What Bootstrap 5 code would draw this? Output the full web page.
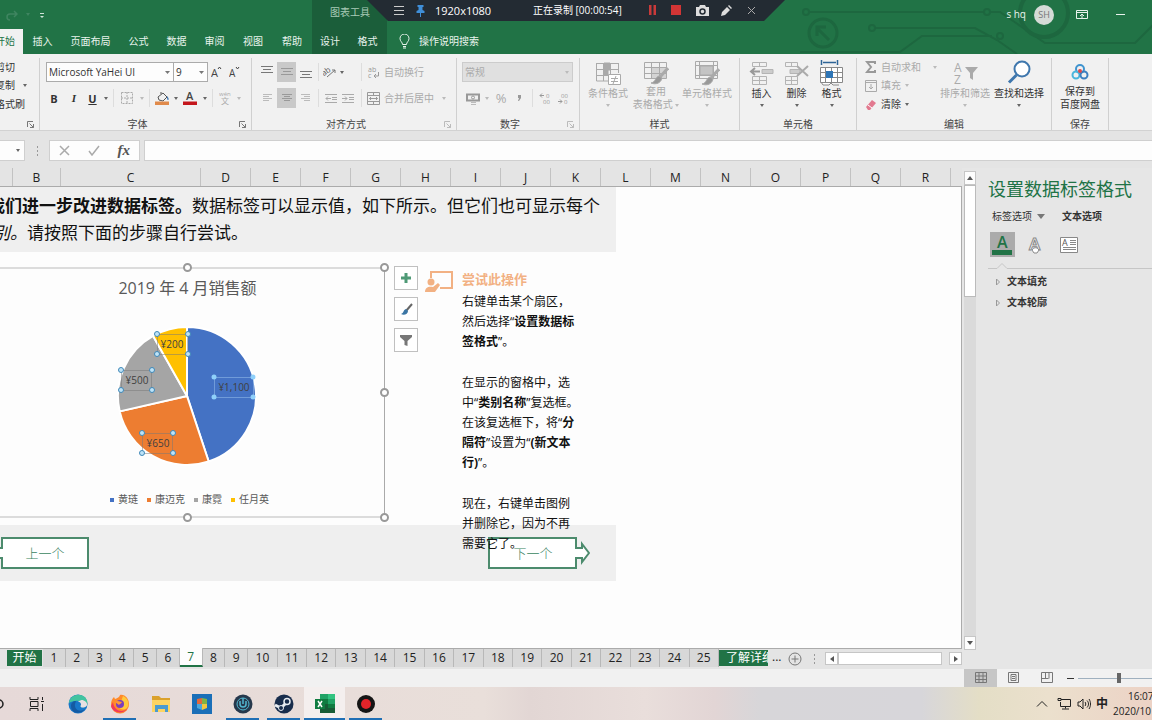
<!DOCTYPE html>
<html lang="zh-CN">
<head>
<meta charset="utf-8">
<meta name="viewport" content="width=device-width, initial-scale=1">
<title>图表教程 - Excel</title>
<link href="https://cdn.jsdelivr.net/npm/bootstrap@5.3.0/dist/css/bootstrap.min.css" rel="stylesheet">
<style>
:root{--xl:#217346;--xl-dark:#1b5e3a;--line:#c8c8c8;--ink:#333;--off:#aaa}
body{font-family:"Open Sans","Noto Sans CJK SC",sans-serif;font-size:10px;line-height:13px;color:var(--ink);background:#e6e6e6}
button,input,select{font:inherit;color:inherit}
button{background:none;border:0;padding:0}
svg{display:block;flex:none}
.st{fill:none}
.st:not([stroke]){stroke:currentColor}
.dn{width:0;height:0;border:2px solid transparent;border-top:3px solid #666;border-bottom:0;flex:none;justify-self:center}
.off{color:var(--off)}
.off .dn,.dn.off{border-top-color:#bbb}
.sep{width:1px;height:18px;background:#ddd;justify-self:center}

/* title bar and tabs */
.topbar{background:var(--xl);color:#e9f3ed;height:54px}
.circuit{right:0;top:0}
.title-row{height:29px}
.quick{width:312px;padding-left:6px;color:#3f8560}
.quick .dn{border-top-color:#3f8560}
.tool-title{width:75px;background:var(--xl-dark);color:#a9cbb7;padding:6px 0 0 18px}
.winbtns{padding-right:26px}
.winbtns button:first-of-type{margin:0 28px 0 22px}
.tab-row{height:25px}
.rtab{height:25px;text-align:center}
.rtab.on{background:#f1f1f1;color:var(--xl);width:23px;padding-right:8px}
.rtabs{display:grid;grid-template-columns:39px 57px 39px 37px 39px 38px 40px}
.ctx{display:grid;grid-template-columns:36px 39px;background:var(--xl-dark)}
.tell{gap:9px;margin-left:12px}
.avatar{width:20px;height:20px;background:#d5dbd7;color:#777;font-size:9px}
.rec{left:50%;top:0;width:418px;height:21px;margin-left:-209px;background:#232b33;color:#fff;clip-path:polygon(0 0,100% 0,397px 100%,21px 100%);display:grid;grid-template-columns:22px 19px 98px 115px 23px 25px 24px 27px 20px;padding-left:27px;align-items:center;z-index:3}
.rec>*{justify-self:start}
.rec .res{font-size:11px}

/* ribbon */
.ribbon{height:77px;background:#f1f1f1;border-bottom:1px solid #d2d2d2}
.grp{border-right:1px solid #d0d0d0;margin-top:4px;height:72px;position:relative}
.grp-name{height:13px;line-height:15px;position:relative;color:#444}
.launch{position:absolute;right:5px;top:4px}
.two-rows{display:grid;row-gap:6px;padding-top:4px}
.rr{display:grid;height:20px;align-items:center;justify-items:center}
.rr>.sel{background:#c9c9c9;width:19px;height:20px;display:grid;place-items:center}
.g-clip{width:40px}.g-font{width:212px}.g-align{width:205px}.g-num{width:123px}.g-style{width:160px}.g-cells{width:117px}.g-edit{width:195px}.g-save{width:57px}
.font1{grid-template-columns:128px 34px 18px 18px;padding-left:6px}
.font2{grid-template-columns:20px 20px 17px 10px 5px 22px 8px 6px 20px 8px 20px 9px 7px 18px 10px;padding-left:4px}
.font2 button{font-size:11px}
.align1{grid-template-columns:20px 19px 19px 6px 17px 8px 9px 12px auto;padding-left:5px;justify-content:start}
.align2{grid-template-columns:20px 19px 19px 6px 19px 15px 12px auto;padding-left:5px;justify-content:start}
.num2{grid-template-columns:18px 10px 18px 18px 8px 18px 18px;padding-left:7px}
.pct{font-size:13px}
.fsel{appearance:none;width:100%;height:20px;border:1px solid #ababab;border-radius:0;padding:0 2px;line-height:18px;color:#333;background:#fdfdfd url("data:image/svg+xml,%3Csvg xmlns='http://www.w3.org/2000/svg' width='5' height='3'%3E%3Cpath d='M0 0h5L2.500 3z' fill='%23777'/%3E%3C/svg%3E") no-repeat right 3px center}
.fsel:disabled{background-color:#e0e0e0;background-image:none;color:#aaa;border-color:#ccc;opacity:1}
.num-pad{padding:0 6px 0 5px}
.num-pad .dn{right:10px;top:9px}
.big{height:53px;line-height:13px}
.big .pic{height:29px}
.big .dn{margin-top:4px}
.small-rows{display:grid;grid-template-rows:18px 19px 19px;align-items:center}
.cut{width:15px}.cut.wide{width:25px}
.w35{width:35px}.w48{width:48px}.w54{width:54px}.w81{width:81px}

/* formula bar */
.fbar{height:37px;background:#e4e4e4;padding:9px 0 7px}
.fbox{background:#fdfdfd;border:1px solid #cfcfcf;height:21px}
.namebox{width:25px;border-left:0}
.fx{width:91px;color:#aaa}
.serif-i{font-family:"Liberation Serif",serif;font-style:italic}
.fxbtn{font-size:15px;color:#555}

/* sheet */
.work{min-height:0}
.heads{height:19px;background:#e4e4e4;border-bottom:1px solid #ababab;font-size:12px;line-height:19px;color:#222}
.heads span{width:50px;flex:none;text-align:center;border-right:1px solid #c2c2c2}
.heads .ca{width:13px}.heads .cb{width:48px}.heads .cc{width:140px}
.cells{background:#fdfdfd;border-right:1px solid #ababab;border-bottom:1px solid #ababab}
.band{background:#efefef;width:616px}
.intro{height:65px;padding-top:5px;font-size:17px;line-height:27px;color:#111}
.intro p{margin:0 0 0 -12px;white-space:nowrap}
.intro p+p{margin-left:-7px}
.lesson{height:273px}
.chartbox{width:394px;height:251px;margin:15px 0 0 -9px;border:solid #dcdcdc;border-width:2px 0;border-right:1px solid #aaa;color:#595959}
.chart-title{font-size:16px;line-height:20px;margin-top:9px}
.hd{position:absolute;width:9px;height:9px;border:2px solid #999;border-radius:50%;background:#fff}
.hd.t{top:-6px}.hd.b{bottom:-6px}.hd.m{left:192px}.hd.e{right:-5px}.hd.c{top:119px}
.pie{margin-top:26px}
.pie text{font-size:10px;fill:#404040}
.legend-row{margin-top:25px;gap:9px}
.sw{width:4px;height:4px}
.k1{background:#4472c4}.k2{background:#ed7d31}.k3{background:#a5a5a5}.k4{background:#ffc000}
.side-tools{width:24px;margin:14px 0 0 9px;gap:7px}
.side-tools button{height:24px;border:1px solid #c0c0c0;background:#fff;display:grid;place-items:center}
.try-icon{margin:18px 8px 0 7px}
.steps{font-size:12px;line-height:20px;color:#111;margin-top:17px;white-space:nowrap;z-index:2;height:0}
.steps h2{font-size:13px;line-height:20px;font-weight:700;color:#f2b183;margin:0 0 3px}
.steps p{margin:0 0 21px}
.navband{height:56px;padding:12px 26px 0 0}
.navband button{height:32px;color:#39835f;font-size:13px;font-weight:300}
.navband svg{position:absolute;top:0;right:0}
.prev{width:90px}.prev span{position:relative}
.next{width:102px}.next span{position:relative;margin-right:12px}

.vbar{width:18px;padding:3px 4px 19px 2px}
.vbar button,.hbar button{background:#fdfdfd;border:1px solid #c6c6c6;display:grid;place-items:center}
.vbar button{height:14px}
.vthumb{height:112px;background:#fff;border:1px solid #bbb}
.vtrack{background:#dadada}
.tri{width:0;height:0;border:3px solid transparent}
.tri.u{border-bottom:4px solid #555;border-top:0}.tri.d{border-top:4px solid #555;border-bottom:0}
.tri.l{border-right:4px solid #555;border-left:0}.tri.r{border-left:4px solid #555;border-right:0}

.sheets{height:20px;font-size:12px;line-height:15px;color:#222;background:#e4e4e4}
.sheet-list{width:676px;height:18px;background:#d8d8d8}
.sheet-list button{flex:23 1 0;min-width:0;padding-bottom:2px;border-right:1px solid #b8b8b8}
.sheet-list button.n2{flex-grow:30}
.sheet-list .on{background:#fdfdfd;color:var(--xl);border-bottom:2px solid var(--xl);margin-top:-1px;padding:0}
.gtab{background:var(--xl);color:#fff;height:16px;line-height:14px;margin-top:1px;overflow:hidden;white-space:nowrap}
.gtab.first{width:35px;margin:1px 1px 0 7px}
.gtab.last{width:49px;padding-left:7px;text-align:left}
.hbar{width:137px;height:13px;margin-top:3px}
.hbar button{width:13px}
.hthumb{background:#fff;border:1px solid #c6c6c6;width:104px}

/* format pane */
.fpane{width:172px;padding:9px 0 0 8px}
.fpane h1{font-size:18px;line-height:24px;color:var(--xl);margin:0;font-weight:400;white-space:nowrap}
.ptabs{margin:9px 0 0 4px}
.picons{margin:9px 0 0 2px;gap:8px}
.picons button{width:25px;height:25px;display:grid;place-items:center}
.picons .on{background:#ababab}
.rule{margin:5px 0 2px}
.pitem{height:21px;padding-left:8px;font-weight:700;gap:7px}

.statusbar{height:18px;background:#f1f1f1}
.vmode{width:33px;height:18px;display:grid;place-items:center;color:#777}
.vmode.on{background:#c6c6c6}
.zoomer{appearance:none;width:74px;height:18px;background:none;margin:0 0 0 4px}
.zoomer::-webkit-slider-runnable-track{height:1px;background:#9fb0bf}
.zoomer::-webkit-slider-thumb{appearance:none;width:4px;height:10px;margin-top:-5px;background:#666}

.taskbar{height:33px;background:linear-gradient(90deg,#e6d9d8 0,#e8ddd9 30%,#e9dfda 42%,#e2d6d4 46%,#e9dedb 56%,#e2d5d5 62%,#d7d6d9 66%,#d7d6da 80%,#e4dec6 85%,#ebe0cd 91%,#ecd2c5 100%);color:#222}
.apps{display:grid;grid-template-columns:16px 41px 42px repeat(7,41px)}
.apps button{height:33px;display:grid;place-items:center;position:relative}
.apps .run::after{content:"";position:absolute;left:4px;right:4px;bottom:0;height:2px;background:#1f6fb5}
.apps .act{background:#f4efee}.apps .act::after{left:0;right:0}
.tray{gap:5px}
.ime{font-size:12px}
.clock{width:39px;line-height:15px;white-space:nowrap}
.clock-t{padding-left:15px}
</style>
</head>
<body class="d-flex flex-column vh-100 overflow-hidden">

<header class="topbar position-relative flex-shrink-0">
  <svg class="circuit position-absolute" width="362" height="54" fill="none" stroke="#1d673f" stroke-width="2">
    <circle cx="16" cy="12" r="3"/><path d="M19 12h176M201 12h9l45 31h90l22-22h10M85 28h100l22 12 20 14M10 52h100l22-16h70"/><circle cx="197" cy="12" r="3"/><circle cx="82" cy="28" r="3"/><circle cx="210" cy="36" r="3"/>
    <circle cx="33" cy="33" r="14" stroke-width="3"/><path d="M39 40L27 28M27 36v-9h9" stroke-width="3"/><circle cx="254" cy="13" r="24" stroke-width="4"/>
  </svg>
  <div class="rec position-absolute" aria-label="录制工具">
    <svg width="11" height="12" class="st" stroke="#ccc"><path d="M0 1.500h10M0 5.500h10M0 9.500h10"/></svg>
    <svg width="9" height="13" fill="#3f8fd8"><path d="M1.500 1h6v2h-1v3l2 1v2H.5V7l2-1V3h-1zM4 9h1v4H4z"/></svg>
    <span class="res">1920x1080</span>
    <span>正在录制 [00:00:54]</span>
    <svg width="9" height="11" fill="#c93a3a"><path d="M1 0h2.500v10H1zM5.500 0H8v10H5.500z"/></svg>
    <svg width="11" height="11" fill="#d23535"><path d="M0 0h10v10H0z"/></svg>
    <svg width="13" height="12"><path d="M0 2h3l1-2h5l1 2h3v9H0z" fill="#ddd"/><circle cx="6.500" cy="6.500" r="2.500" fill="none" stroke="#232b33" stroke-width="1.500"/></svg>
    <svg width="12" height="12" fill="#ddd"><path d="M1 11l1-4 5-5 3 3-5 5zM8 1l1-1 3 3-1 1z"/></svg>
    <svg width="9" height="9" class="st" stroke="#aaa"><path d="M1 1l7 7M8 1L1 8"/></svg>
  </div>
  <div class="title-row d-flex">
    <div class="quick d-flex align-items-center gap-2">
      <svg width="12" height="12" class="st"><path d="M11 5H4a3 3 0 0 0 0 6M8 2l3 3-3 3" stroke-width="1.500"/></svg>
      <span class="dn"></span>
      <svg width="8" height="8" fill="#cfe3d8"><path d="M2 2h4v1H2zM2 5h4L4 7z"/></svg>
    </div>
    <div class="tool-title">图表工具</div>
    <div class="winbtns ms-auto d-flex align-items-center position-relative">
      <span class="me-2">s hq</span>
      <span class="avatar rounded-circle d-flex align-items-center justify-content-center">SH</span>
      <button aria-label="功能区显示选项"><svg width="12" height="10" class="st"><path d="M.5.5h11v8H.5zM.5 2.500h11M6 8V4M4 6l2-2 2 2"/></svg></button>
      <button aria-label="最小化"><svg width="10" height="4" class="st"><path d="M0 1.500h9"/></svg></button>
    </div>
  </div>
  <nav class="tab-row d-flex">
    <button class="rtab on d-flex justify-content-end align-items-center overflow-hidden text-nowrap">开始</button>
    <div class="rtabs">
      <button class="rtab">插入</button><button class="rtab">页面布局</button><button class="rtab">公式</button><button class="rtab">数据</button><button class="rtab">审阅</button><button class="rtab">视图</button><button class="rtab">帮助</button>
    </div>
    <div class="ctx"><button class="rtab">设计</button><button class="rtab">格式</button></div>
    <button class="tell d-flex align-items-center"><svg width="11" height="15" class="st"><path d="M3.500 10.500C3.500 8 1 7.500 1 4.500a4.200 4.200 0 0 1 9 0c0 3-2.500 3.500-2.500 6zM4 12.500h3M4 14h3"/></svg>操作说明搜索</button>
  </nav>
</header>

<section class="ribbon d-flex flex-shrink-0 overflow-hidden">
  <div class="grp g-clip flex-shrink-0 d-flex flex-column justify-content-between">
    <div class="small-rows">
      <button class="cut overflow-hidden d-flex justify-content-end text-nowrap">剪切</button>
      <div class="d-flex align-items-center gap-2"><button class="cut overflow-hidden d-flex justify-content-end text-nowrap">复制</button><span class="dn"></span></div>
      <button class="cut wide overflow-hidden d-flex justify-content-end text-nowrap">格式刷</button>
    </div>
    <div class="grp-name"><svg class="launch st" stroke="#777" width="7" height="7"><path d="M.5 6V.5H6M2.500 2.500l4 4M6.500 3v3.500H3"/></svg></div>
  </div>

  <div class="grp g-font flex-shrink-0 d-flex flex-column justify-content-between">
    <div class="two-rows">
      <div class="rr font1">
        <select class="fsel" aria-label="字体"><option>Microsoft YaHei UI</option></select>
        <select class="fsel border-start-0" aria-label="字号"><option>9</option></select>
        <button aria-label="增大字号"><svg width="12" height="13"><text x="0" y="11" font-size="11" fill="#444">A</text><path d="M7 3l1.500-2L10 3" class="st" stroke="#444"/></svg></button>
        <button aria-label="减小字号"><svg width="12" height="13"><text x="0" y="11" font-size="10" fill="#444">A</text><path d="M7 1l1.500 2L10 1" class="st" stroke="#444"/></svg></button>
      </div>
      <div class="rr font2">
        <button class="fw-bold">B</button><button class="serif-i fw-bold">I</button><button class="fw-bold text-decoration-underline">U</button><span class="dn"></span><span class="sep"></span>
        <svg width="12" height="12" class="st off" stroke-dasharray="2 1"><path d="M.5.5h11v11H.5zM6 0v12M0 6h12"/></svg><span class="dn off"></span><span class="sep"></span>
        <svg width="15" height="14"><path d="M3 6l5-4 4 4-4 4-4-1z M6 3V1" class="st" stroke="#555"/><path d="M12 5c2 2 2 4 1 4s-1-2-1-4" fill="#3b76b5"/><path d="M0 10.500h14V14H0z" fill="#e08a4a"/></svg><span class="dn"></span>
        <svg width="14" height="14"><text x="3" y="9" font-size="11" font-weight="600" fill="#444">A</text><path d="M0 10.500h14V14H0z" fill="#c4161c"/></svg><span class="dn"></span><span class="sep"></span>
        <svg width="12" height="14" fill="#aaa"><text x="0" y="5" font-size="6">wén</text><text x="2" y="13" font-size="8">文</text></svg><span class="dn off"></span>
      </div>
    </div>
    <div class="grp-name text-center pe-3">字体<svg class="launch st" stroke="#777" width="7" height="7"><path d="M.5 6V.5H6M2.500 2.500l4 4M6.500 3v3.500H3"/></svg></div>
  </div>

  <div class="grp g-align flex-shrink-0 d-flex flex-column justify-content-between">
    <div class="two-rows">
      <div class="rr align1">
        <svg width="12" height="12" class="st" stroke="#777"><path d="M0 .5h12M2 3.500h8M0 6.500h12"/></svg>
        <span class="sel"><svg width="12" height="12" class="st" stroke="#999"><path d="M0 2.500h12M2 5.500h8M0 8.500h12"/></svg></span>
        <svg width="12" height="12" class="st" stroke="#777"><path d="M0 5.500h12M2 8.500h8M0 11.500h12"/></svg><span class="sep"></span>
        <svg width="13" height="12" class="st" stroke="#777"><text x="0" y="8" font-size="8" fill="#555" stroke="none" transform="rotate(-35 4 8)">ab</text><path d="M4 11l8-7M9 4h3v3"/></svg><span class="dn"></span><i></i><span class="sep"></span>
        <button class="off d-flex align-items-center gap-1" disabled><svg width="13" height="13" fill="#999"><text x="1" y="6" font-size="7">ab</text><text x="1" y="12" font-size="7">c</text><path d="M11.500 6v4H7M9 8l-2 2 2 2" class="st" stroke="#999"/></svg>自动换行</button>
      </div>
      <div class="rr align2">
        <svg width="10" height="10" class="st" stroke="#bbb"><path d="M1 1.500h9M1 3.500h6M1 5.500h9M1 7.500h6"/></svg>
        <span class="sel"><svg width="10" height="10" class="st" stroke="#999"><path d="M0 1.500h10M2 3.500h6M0 5.500h10M2 7.500h6"/></svg></span>
        <svg width="10" height="10" class="st" stroke="#bbb"><path d="M0 1.500h9M3 3.500h6M0 5.500h9M3 7.500h6"/></svg><span class="sep"></span>
        <svg width="12" height="11" class="st" stroke="#aaa"><path d="M0 1.500h12M7 4.500h5M7 6.500h5M0 9.500h12M6 5.500H1M3 3.500l-2 2 2 2"/></svg>
        <svg width="12" height="11" class="st" stroke="#aaa"><path d="M0 1.500h12M7 4.500h5M7 6.500h5M0 9.500h12M0 5.500h5M3 3.500l2 2-2 2"/></svg><span class="sep"></span>
        <button class="off d-flex align-items-center gap-1" disabled><svg width="13" height="13" class="st" stroke="#999"><path d="M.5.5h12v12H.5zM.5 3.500h12M.5 9.500h12M6.500 0v3.500M6.500 9.500V13M2.500 6.500h8M4 5L2.500 6.500 4 8M9 5l1.500 1.500L9 8"/></svg>合并后居中<span class="dn ms-1"></span></button>
      </div>
    </div>
    <div class="grp-name text-center pe-3">对齐方式<svg class="launch st" stroke="#bbb" width="7" height="7"><path d="M.5 6V.5H6M2.500 2.500l4 4M6.500 3v3.500H3"/></svg></div>
  </div>

  <div class="grp g-num flex-shrink-0 d-flex flex-column justify-content-between">
    <div class="two-rows">
      <div class="num-pad off position-relative"><select class="fsel" aria-label="数字格式" disabled><option>常规</option></select><span class="dn position-absolute"></span></div>
      <div class="rr num2 off">
        <svg width="14" height="13" class="st" stroke="#999"><path d="M1 2.500h12v6H1z" stroke-width="2"/><circle cx="7" cy="5.500" r="1.500"/><path d="M5 10.500h5M5 12.500h5" stroke="#bbb"/></svg><span class="dn"></span>
        <button class="pct" disabled>%</button><svg width="5" height="8" fill="#999"><path d="M1 1h3v3L2 7H1l1-3H1z"/></svg><span class="sep"></span>
        <svg width="13" height="13" fill="#999"><path d="M5 3.500H1M3 1.500l-2 2 2 2" class="st" stroke="#999"/><text x="7" y="6" font-size="6">0</text><text x="4" y="12" font-size="6">00</text></svg>
        <svg width="13" height="13" fill="#999"><text x="4" y="6" font-size="6">00</text><path d="M1 9.500h4M3 7.500l2 2-2 2" class="st" stroke="#999"/><text x="7" y="12" font-size="6">0</text></svg>
      </div>
    </div>
    <div class="grp-name text-center pe-3">数字<svg class="launch st" stroke="#bbb" width="7" height="7"><path d="M.5 6V.5H6M2.500 2.500l4 4M6.500 3v3.500H3"/></svg></div>
  </div>

  <div class="grp g-style flex-shrink-0 d-flex flex-column justify-content-between">
    <div class="d-flex ps-1 off">
      <button class="big w48 d-flex flex-column align-items-center" disabled><span class="pic d-flex align-items-center"><svg width="26" height="26" class="st" stroke="#aaa"><path d="M1 3.500h22M1 9.500h22M1 15.500h22M1.500 3v18h12M8.500 3v18M15.500 3v13M23.500 3v10"/><path d="M9 3h6v7H9zM9 10h4v5H9z" fill="#aaa"/><path d="M13.500 14.500h12v10h-12z" fill="#fff"/><path d="M16 18.500h7M16 21.500h7M21 16l-3 8"/></svg></span>条件格式<span class="dn"></span></button>
      <button class="big w48 d-flex flex-column align-items-center" disabled><span class="pic d-flex align-items-center"><svg width="26" height="26" class="st" stroke="#aaa"><path d="M8 8h15v12H8z" fill="#d4d4d4" stroke="none"/><path d="M1.500 3.500h22v16h-22zM1 8.500h22M1 14.500h22M8.500 3v17M16.500 3v17"/><path d="M25 9l-8 9" stroke-width="3"/><path d="M16 17c-4 1-3 6-8 7 5 2 10 0 11-5z" fill="#999"/></svg></span>套用<span class="text-nowrap">表格格式 <span class="dn d-inline-block align-middle m-0"></span></span></button>
      <button class="big w54 d-flex flex-column align-items-center" disabled><span class="pic d-flex align-items-center"><svg width="26" height="26" class="st" stroke="#aaa"><path d="M1.500 1.500h22v17h-22zM1 5.500h22M1 15.500h22M5.500 1v17M19.500 1v17"/><path d="M6 6h13v9H6z" fill="#c4c4c4"/><path d="M25 9l-8 9" stroke-width="3"/><path d="M16 17c-4 1-3 6-8 7 5 2 10 0 11-5z" fill="#999"/></svg></span>单元格样式<span class="dn"></span></button>
    </div>
    <div class="grp-name text-center">样式</div>
  </div>

  <div class="grp g-cells flex-shrink-0 d-flex flex-column justify-content-between">
    <div class="d-flex ps-1">
      <button class="big w35 d-flex flex-column align-items-center"><span class="pic d-flex align-items-center"><svg width="25" height="26" class="st" stroke="#b4b4b4"><path d="M3.500 2.500h14v4h-14zM10.500 2v5M3.500 16.500h14v8h-14zM3 20.500h15M10.500 16v9"/><path d="M13 9.500h11v4H13z" fill="#ccc"/><path d="M11 11.500H2M6 8l-4 3.500L6 15" stroke="#999" stroke-width="2"/></svg></span>插入<span class="dn"></span></button>
      <button class="big w35 d-flex flex-column align-items-center"><span class="pic d-flex align-items-center"><svg width="25" height="26" class="st" stroke="#b4b4b4"><path d="M1.500 2.500h12v4h-12zM7.500 2v5M1.500 16.500h12v8h-12zM1 20.500h13M7.500 16v9"/><path d="M6 9.500h10v4H6z" fill="#ccc"/><path d="M13 6l11 10M24 6L13 16" stroke="#aaa" stroke-width="2"/></svg></span>删除<span class="dn"></span></button>
      <button class="big w35 d-flex flex-column align-items-center"><span class="pic d-flex align-items-center"><svg width="25" height="26" class="st" stroke="#888"><path d="M1.500 7.500h22v15h-22zM1 12.500h22M1 17.500h22M6.500 7v15M12.500 7v15M18.500 7v15M2 22l2 3h6l2-2 2 2h6" fill="#fff"/><path d="M7 11h7v7H7z" fill="#2e75b6" stroke="none"/><path d="M2.500 0v5M18.500 0v5M4 2.500h13" stroke="#2e6496" stroke-width="1.500"/></svg></span>格式<span class="dn"></span></button>
    </div>
    <div class="grp-name text-center">单元格</div>
  </div>

  <div class="grp g-edit flex-shrink-0 d-flex flex-column justify-content-between">
    <div class="d-flex">
      <div class="small-rows ps-2 w81">
        <button class="off d-flex align-items-center gap-1" disabled><svg width="12" height="12" class="st" stroke="#999"><path d="M10 3V1H2l4 5-4 5h8V9" stroke-width="2"/></svg>自动求和<span class="dn ms-2"></span></button>
        <button class="off d-flex align-items-center gap-1" disabled><svg width="12" height="12" class="st"><path d="M.5.5h11v11H.5zM.5 2.500h11M6 4v5M4 7l2 2 2-2" /></svg>填充<span class="dn"></span></button>
        <button class="d-flex align-items-center gap-1"><svg width="12" height="12"><path d="M1 8l6-7 4 3-6 7H3z" fill="#e2798f"/><path d="M3 6l4 3" stroke="#fff"/></svg>清除<span class="dn"></span></button>
      </div>
      <button class="big w54 off d-flex flex-column align-items-center text-nowrap" disabled><span class="pic d-flex align-items-center"><svg width="25" height="24" fill="#aaa"><text x="1" y="11" font-size="12">A</text><text x="1" y="23" font-size="12">Z</text><path d="M12 6h13l-5 6v7l-3-2v-5z"/></svg></span>排序和筛选<span class="dn"></span></button>
      <button class="big w54 d-flex flex-column align-items-center text-nowrap"><span class="pic d-flex align-items-center"><svg width="25" height="25" fill="none"><circle cx="15" cy="9" r="7.500" stroke="#3f77ad" stroke-width="2" fill="#fff"/><path d="M9.500 15L2 22.500" stroke="#3f77ad" stroke-width="3"/></svg></span>查找和选择<span class="dn"></span></button>
    </div>
    <div class="grp-name text-center">编辑</div>
  </div>

  <div class="grp g-save flex-shrink-0 d-flex flex-column justify-content-between">
    <button class="big d-flex flex-column align-items-center"><span class="pic d-flex align-items-center"><svg width="18" height="16" fill="none" stroke-width="2"><circle cx="9" cy="5" r="4" stroke="#3f93cf"/><circle cx="5" cy="11" r="3.500" stroke="#48b6dc"/><circle cx="13" cy="11" r="3.500" stroke="#3c7fc0"/><circle cx="9" cy="7" r="2" fill="#e04a4a"/></svg></span>保存到<br>百度网盘</button>
    <div class="grp-name text-center">保存</div>
  </div>
</section>

<section class="fbar d-flex flex-shrink-0">
  <button class="fbox namebox d-flex align-items-center justify-content-end pe-1" aria-label="名称框"><span class="dn"></span></button>
  <svg width="24" height="21" fill="#999"><path d="M12 6h1v2h-1zM12 10h1v2h-1zM12 14h1v2h-1z"/></svg>
  <div class="fbox fx d-flex align-items-center justify-content-around">
    <svg width="11" height="11" class="st"><path d="M1 1l9 9M10 1l-9 9" stroke-width="1.500"/></svg>
    <svg width="12" height="11" class="st"><path d="M1 6l3 4 7-9" stroke-width="1.500"/></svg>
    <button class="serif-i fxbtn fw-bold">fx</button>
  </div>
  <input class="fbox flex-grow-1 ms-1 border-end-0" aria-label="编辑栏">
</section>

<main class="work d-flex flex-grow-1">
  <div class="d-flex flex-column flex-grow-1 overflow-hidden">
    <div class="heads d-flex flex-shrink-0 overflow-hidden"><span class="ca"></span><span class="cb">B</span><span class="cc">C</span><span>D</span><span>E</span><span>F</span><span>G</span><span>H</span><span>I</span><span>J</span><span>K</span><span>L</span><span>M</span><span>N</span><span>O</span><span>P</span><span>Q</span><span>R</span></div>
    <div class="cells flex-grow-1 overflow-hidden">
      <div class="band intro"><p><b>我们进一步改进数据标签。</b>数据标签可以显示值，如下所示。但它们也可显示每个</p><p><i>别。</i>请按照下面的步骤自行尝试。</p></div>
      <div class="lesson d-flex align-items-start">
        <div class="chartbox position-relative flex-shrink-0 d-flex flex-column align-items-center">
          <div class="chart-title">2019 年 4 月销售额</div>
          <svg class="pie" width="144" height="144" viewBox="-1 -2 144 144">
            <g stroke="#fff" stroke-width="2">
              <path d="M70 70V1a69 69 0 0 1 21.700 134.500z" fill="#4472c4"/>
              <path d="M70 70l21.700 65.500A69 69 0 0 1 2.700 85.400z" fill="#ed7d31"/>
              <path d="M70 70L2.700 85.400A69 69 0 0 1 36.100 9.900z" fill="#a5a5a5"/>
              <path d="M70 70L36.100 9.900A69 69 0 0 1 70 1z" fill="#ffc000"/>
            </g>
            <g fill="none" stroke="#777" stroke-opacity=".5"><path d="M40.500 8.500h30v20h-30zM4.500 44.500h30v20h-30zM25.500 107.500h30v20h-30z"/><path d="M97.500 51.500h39v20h-39z" stroke="#9cc3ee"/></g>
            <g text-anchor="middle"><text x="55" y="22">¥200</text><text x="20" y="58">¥500</text><text x="41" y="121">¥650</text><text x="117" y="65">¥1,100</text></g>
            <g fill="#bfe3f7" stroke="#3f88b8"><circle cx="40" cy="8" r="2.500"/><circle cx="71" cy="8" r="2.500"/><circle cx="40" cy="28" r="2.500"/><circle cx="71" cy="28" r="2.500"/><circle cx="4" cy="44" r="2.500"/><circle cx="35" cy="44" r="2.500"/><circle cx="4" cy="64" r="2.500"/><circle cx="35" cy="64" r="2.500"/><circle cx="25" cy="107" r="2.500"/><circle cx="56" cy="107" r="2.500"/><circle cx="25" cy="127" r="2.500"/><circle cx="56" cy="127" r="2.500"/></g>
            <g fill="#8fd0fa"><circle cx="97" cy="51" r="2.500"/><circle cx="136" cy="51" r="2.500"/><circle cx="97" cy="71" r="2.500"/><circle cx="136" cy="71" r="2.500"/></g>
          </svg>
          <div class="legend-row d-flex ps-1">
            <span class="d-flex align-items-center gap-1"><i class="sw k1"></i>黄琏</span><span class="d-flex align-items-center gap-1"><i class="sw k2"></i>康迈克</span><span class="d-flex align-items-center gap-1"><i class="sw k3"></i>康霓</span><span class="d-flex align-items-center gap-1"><i class="sw k4"></i>任月英</span>
          </div>
          <span class="hd t m"></span><span class="hd t e"></span><span class="hd c e"></span><span class="hd b m"></span><span class="hd b e"></span>
        </div>
        <div class="side-tools d-flex flex-column flex-shrink-0">
          <button aria-label="图表元素"><svg width="12" height="12"><path d="M4.500 1h3v3.500H11v3H7.500V11h-3V7.500H1v-3h3.500z" fill="#4f9a76"/></svg></button>
          <button aria-label="图表样式"><svg width="13" height="13"><path d="M12 1L6 8" stroke="#666" stroke-width="2"/><path d="M6 6c-3 1-2 4-5 5 3 2 7 0 7-3z" fill="#3b76a5"/></svg></button>
          <button aria-label="图表筛选器"><svg width="14" height="13" fill="#777"><path d="M1 1h12v2L8.500 7v5l-3-1V7L1 3z"/></svg></button>
        </div>
        <svg class="try-icon" width="29" height="23" fill="none"><path d="M6 8V2h21v16H15" stroke="#f2b183" stroke-width="2"/><circle cx="6" cy="12" r="3.500" fill="#f2b183"/><path d="M0 22c0-5 4-6 8-5l5-4 2 2-5 7z" fill="#f2b183"/></svg>
        <div class="steps position-relative">
          <h2>尝试此操作</h2>
          <p>右键单击某个扇区，<br>然后选择“<b>设置数据标<br>签格式</b>”。</p>
          <p>在显示的窗格中，选<br>中“<b>类别名称</b>”复选框。<br>在该复选框下，将“<b>分<br>隔符</b>”设置为“<b>(新文本<br>行)</b>”。</p>
          <p>现在，右键单击图例<br>并删除它，因为不再<br>需要它了。</p>
        </div>
      </div>
      <div class="band navband d-flex justify-content-between">
        <button class="prev position-relative"><svg width="90" height="32" fill="#fff" stroke="#4c8b6d" stroke-width="2"><path d="M2 1h86v30H2V21h-5V11h5z"/></svg><span>上一个</span></button>
        <button class="next position-relative"><svg width="102" height="32" fill="#fff" stroke="#4c8b6d" stroke-width="2"><path d="M1 1h87v10h6V7l7 9-7 9v-4h-6v10H1z"/></svg><span>下一个</span></button>
      </div>
    </div>
    <div class="sheets d-flex flex-shrink-0">
      <button class="gtab first">开始</button>
      <div class="sheet-list d-flex flex-shrink-0"><button>1</button><button>2</button><button>3</button><button>4</button><button>5</button><button>6</button><button class="on">7</button><button>8</button><button>9</button><button class="n2">10</button><button class="n2">11</button><button class="n2">12</button><button class="n2">13</button><button class="n2">14</button><button class="n2">15</button><button class="n2">16</button><button class="n2">17</button><button class="n2">18</button><button class="n2">19</button><button class="n2">20</button><button class="n2">21</button><button class="n2">22</button><button class="n2">23</button><button class="n2">24</button><button class="n2">25</button></div>
      <button class="gtab last">了解详细</button>
      <span class="ms-1">...</span>
      <div class="d-flex ms-auto">
        <button aria-label="新工作表"><svg width="14" height="18" class="st" stroke="#777"><circle cx="7" cy="9" r="6"/><path d="M7 5.500v7M3.500 9h7"/></svg></button>
        <svg width="23" height="18" fill="#999"><path d="M12 5h1v2h-1zM12 9h1v2h-1zM12 13h1v2h-1z"/></svg>
        <div class="hbar d-flex justify-content-between"><div class="d-flex"><button aria-label="向左滚动"><i class="tri l"></i></button><div class="hthumb"></div></div><button aria-label="向右滚动"><i class="tri r"></i></button></div>
      </div>
    </div>
  </div>
  <div class="vbar d-flex flex-column flex-shrink-0">
    <button aria-label="向上滚动"><i class="tri u"></i></button><div class="vthumb flex-shrink-0"></div><div class="vtrack flex-grow-1"></div><button aria-label="向下滚动" class="flex-shrink-0"><i class="tri d"></i></button>
  </div>
  <aside class="fpane flex-shrink-0 overflow-hidden">
    <h1>设置数据标签格式</h1>
    <div class="ptabs d-flex align-items-center"><button>标签选项</button><svg class="ms-1 me-3" width="10" height="5" fill="#777"><path d="M1 0h8L5 5z"/></svg><button class="fw-bold">文本选项</button></div>
    <div class="picons d-flex">
      <button class="on" aria-label="文本填充与轮廓"><svg width="21" height="21"><text x="5" y="14" font-size="16" font-weight="600" fill="#217346">A</text><path d="M0 16h20v5H0z" fill="#217346"/></svg></button>
      <button aria-label="文字效果"><svg width="15" height="19"><text x="1" y="15" font-size="17" font-weight="600" fill="#fff" stroke="#888">A</text><path d="M4 15c2-3 5-3 7 0l-2 3H6z" fill="#fff" stroke="#888"/></svg></button>
      <button aria-label="文本框"><svg width="18" height="16" class="st" stroke="#888"><path d="M.5.5h17v15H.5z" fill="#fff"/><path d="M10 3.500h6M10 5.500h6M10 7.500h6M3 10.500h13M3 12.500h13"/><text x="2" y="9" font-size="9" fill="#555" stroke="none">A</text></svg></button>
    </div>
    <svg class="rule st" width="400" height="7" stroke="#c6c6c6"><path d="M0 6.500h9l5-5 5 5h400" /></svg>
    <div><button class="pitem d-flex align-items-center"><svg width="4" height="8" class="st" stroke="#999"><path d="M.5 1l3 3-3 3z"/></svg>文本填充</button>
    <button class="pitem d-flex align-items-center"><svg width="4" height="8" class="st" stroke="#999"><path d="M.5 1l3 3-3 3z"/></svg>文本轮廓</button></div>
  </aside>
</main>

<div class="statusbar d-flex justify-content-end flex-shrink-0">
  <button class="vmode on" aria-label="普通"><svg width="12" height="12" class="st"><path d="M.5.5h11v10H.5zM.5 4h11M.5 7.500h11M4 .5v10M8 .5v10"/></svg></button>
  <button class="vmode" aria-label="页面布局"><svg width="11" height="12" class="st"><path d="M.5.5h10v10H.5zM3 2.500h5v6H3zM4 4.500h3M4 6.500h3"/></svg></button>
  <button class="vmode" aria-label="分页预览"><svg width="12" height="12" class="st"><path d="M.5.5h11v10H.5zM4.500.5v6M8 .5v6M.5 6.500h7"/></svg></button>
  <button aria-label="缩小" class="ms-1"><svg width="7" height="3" class="st"><path d="M0 1.500h7"/></svg></button>
  <input class="zoomer" type="range" min="0" max="100" value="56" aria-label="缩放">
</div>

<footer class="taskbar d-flex justify-content-between flex-shrink-0">
  <div class="apps">
    <button aria-label="搜索" class="overflow-hidden"><svg width="16" height="12" class="st"><circle cx="-1" cy="6" r="4" stroke-width="1.500"/></svg></button>
    <button aria-label="任务视图"><svg width="15" height="14" class="st"><path d="M1 0v2.500h8V0M1 14v-2.500h8V14M1.500 4.500h7.500v5H1.500zM13.500 0v3M13.500 7v7M12 4.500h3"/></svg></button>
    <button aria-label="Edge"><svg width="20" height="20"><circle cx="10" cy="10" r="9.500" fill="#1877c9"/><path d="M1 9C2-2 19-2 19.500 9c0 5-7 5-7 3 2-3-1-6-5-5-3 0-5 1-6.500 2z" fill="#43c4a0"/><path d="M7 10c-1 5 4 9 10 5-4 6-14 5-14-3 0-3 2-5 5-5z" fill="#155aa2"/><path d="M9 8c3-1 5 2 3.500 4 0 2 4 2 6 0 2-2-1-6-5-6z" fill="#e7e0e2"/></svg></button>
    <button aria-label="Firefox" class="run"><svg width="20" height="20"><path d="M10 1c5-1 9 4 9 9a9 9 0 0 1-18 1C1 7 2 5 4 3l1 2c2-1 4-1 5-4z" fill="#ff8a2b"/><path d="M13 2c5 2 7 8 4 12-4 3-7 1-8-1z" fill="#ffc93c"/><path d="M3 8c1 9 9 11 14 7-3 5-14 5-16-3z" fill="#f2385a"/><circle cx="10" cy="10" r="4" fill="#7b3fbd"/><path d="M5 8c3-2 5 0 7 0-1 2-3 2-3 3z" fill="#ff9a33"/></svg></button>
    <button aria-label="文件资源管理器"><svg width="20" height="18"><path d="M1 1h7l2 2h9v6H1z" fill="#dba12c"/><path d="M1 5h18v12H1z" fill="#fcd462"/><path d="M4 10h13v7h-3v-3H7v3H4z" fill="#4a9bd0"/></svg></button>
    <button aria-label="应用"><svg width="20" height="20"><path d="M0 0h20v20H0z" fill="#1a6fb8"/><path d="M5 5l5-1v6H5z" fill="#e4683c"/><path d="M10 4l5 1v5h-5z" fill="#7fb347"/><path d="M5 10h5v6l-5-2z" fill="#4ba7dc"/><path d="M10 10h5v4l-5 2z" fill="#f3c63d"/></svg></button>
    <button aria-label="安全工具" class="run"><svg width="20" height="20" fill="none"><circle cx="10" cy="10" r="9.500" fill="#26384c"/><circle cx="10" cy="10" r="6" stroke="#52b6cf"/><path d="M7 7v3a3 3 0 0 0 6 0V7M10 4v6" stroke="#52b6cf" stroke-width="1.500"/></svg></button>
    <button aria-label="Steam" class="run"><svg width="20" height="20" fill="none"><circle cx="10" cy="10" r="9.500" fill="#182d4c"/><path d="M1 11l6 3 6-6" stroke="#e8edf2" stroke-width="3"/><circle cx="13" cy="7.500" r="3" fill="#182d4c" stroke="#e8edf2" stroke-width="1.500"/><circle cx="7" cy="14" r="2.500" fill="#182d4c" stroke="#e8edf2"/></svg></button>
    <button aria-label="Excel" class="run act"><svg width="20" height="19"><path d="M5 0h15v19H5z" fill="#21a366"/><path d="M5 5h8v5H5z" fill="#107c41"/><path d="M13 0h7v5h-7z" fill="#33c481"/><path d="M5 10h15v9H5z" fill="#185c37"/><path d="M13 10h7v4h-7z" fill="#107c41"/><path d="M0 5h10v10H0z" fill="#107c41"/><path d="M3 7l4 6M7 7l-4 6" stroke="#fff" stroke-width="1.500"/></svg></button>
    <button aria-label="录屏" class="run"><svg width="18" height="18"><circle cx="9" cy="9" r="9" fill="#151515"/><circle cx="9" cy="9" r="5" fill="#e5242a"/></svg></button>
  </div>
  <div class="tray d-flex align-items-center">
    <svg width="12" height="8" class="st"><path d="M1 6.500l5-5 5 5"/></svg>
    <svg width="15" height="13" class="st ms-1"><path d="M4 2.500h9.500v7H3.500V5M8.500 9.500v2M5 12h7M1 1.500h3v2H1z"/></svg>
    <svg width="14" height="12" class="st"><path d="M1 4h2l3-3v10L3 8H1zM8 4c1 1 1 3 0 4M10 2.500c2 2 2 5 0 7M12 1c2 3 2 7 0 10"/></svg>
    <span class="fw-bold ime">中</span>
    <div class="clock overflow-hidden"><div class="clock-t">16:07</div><div>2020/10</div></div>
  </div>
</footer>

<script src="https://cdn.jsdelivr.net/npm/bootstrap@5.3.0/dist/js/bootstrap.bundle.min.js"></script>
</body>
</html>
